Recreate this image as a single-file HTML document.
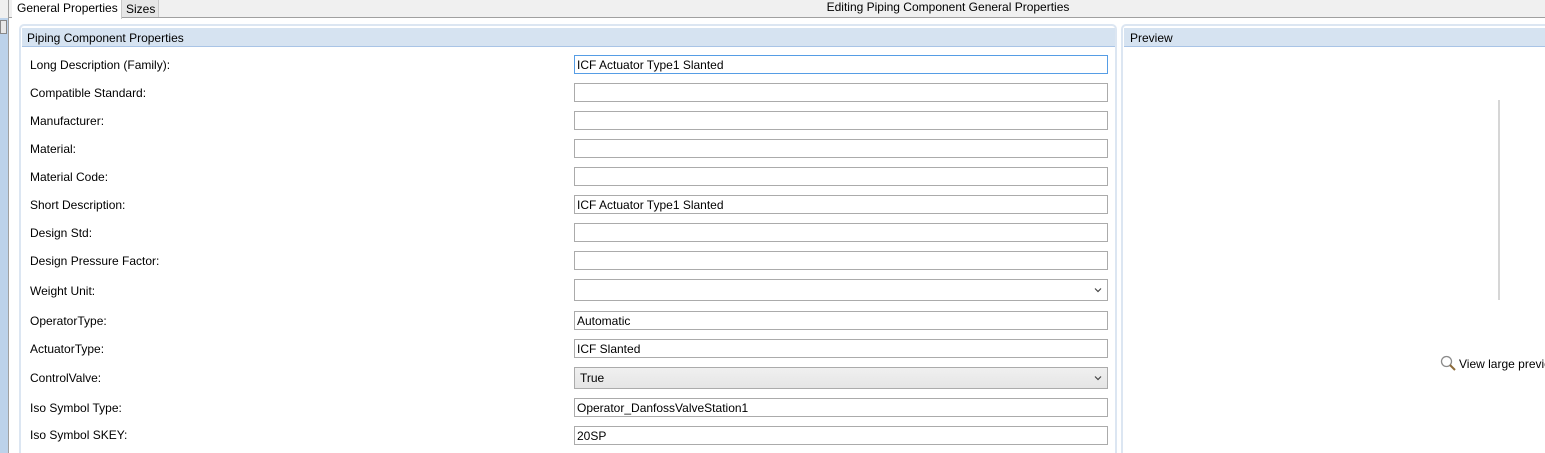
<!DOCTYPE html>
<html style="overflow:hidden"><head><style>
html,body{margin:0;width:1545px;height:453px;overflow:hidden}
body{background:#fff;font-family:"Liberation Sans",sans-serif;font-size:12px;color:#000;position:relative}
.a{position:absolute;box-sizing:border-box}
.lbl{position:absolute;left:30px;font-size:12px;line-height:14px}
.in{position:absolute;left:574px;width:534px;height:19px;border:1px solid #ababab;box-sizing:border-box;background:#fff;padding-left:2px;padding-top:1px;font-size:12px;line-height:17px}
.cb{height:22px;line-height:20px;padding-left:5px;padding-top:0}
.arr{position:absolute;right:5px;top:7px}
</style></head><body>
<div class="a" style="left:0;top:0;width:1545px;height:18px;background:#f0f0f0;border-bottom:1px solid #a0a0a0"></div>
<div class="a" style="left:0;top:0;width:9px;height:453px;background:#f0f0f0;border-right:1px solid #a0a0a0"></div>
<div class="a" style="left:0;top:18px;width:8px;height:435px;background:#bcd2ea"></div>
<div class="a" style="left:0;top:20px;width:7px;height:14px;border:1px solid #888;background:#e8e8e8"></div>
<div class="a" style="left:12px;top:0;width:110px;height:19px;background:#fff;border-right:1px solid #c8c8c8;padding:1px 0 0 5px;font-size:12px">General Properties</div>
<div class="a" style="left:122px;top:0;width:37px;height:17px;background:#e6e6e6;border-right:1px solid #c8c8c8;padding:2px 0 0 4px;font-size:12px">Sizes</div>
<div class="a" style="left:780px;top:0;width:336px;text-align:center;font-size:12px;line-height:14px">Editing Piping Component General Properties</div>

<div class="a" style="left:19px;top:24px;width:1098px;height:429px;border:2px solid #dce6f2;border-bottom:none;border-radius:5px 5px 0 0"></div>
<div class="a" style="left:22px;top:28px;width:1093px;height:19px;background:#d6e3f1;border-bottom:1px solid #a9c4e6;padding:3px 0 0 5px">Piping Component Properties</div>

<div class="a" style="left:1121px;top:24px;width:424px;height:429px;border:2px solid #dce6f2;border-bottom:none;border-right:none;border-radius:5px 0 0 0"></div>
<div class="a" style="left:1124px;top:28px;width:421px;height:19px;background:#d6e3f1;border-bottom:1px solid #a9c4e6;padding:3px 0 0 6px">Preview</div>
<div class="a" style="left:1498px;top:100px;width:2px;height:200px;background:#d6d6d6"></div>
<svg class="a" style="left:1440px;top:355px" width="17" height="17"><circle cx="6.5" cy="6.5" r="5" fill="none" stroke="#8a8a8a" stroke-width="1.3"/><line x1="10" y1="10" x2="15" y2="15" stroke="#8b6a3a" stroke-width="2"/></svg>
<div class="a" style="left:1459px;top:357px;width:86px;white-space:nowrap;overflow:hidden">View large preview</div>

<div class="lbl" style="top:58px">Long Description (Family):</div>
<div class="in" style="top:55px;border-color:#569de5">ICF Actuator Type1 Slanted</div>
<div class="lbl" style="top:86px">Compatible Standard:</div><div class="in" style="top:83px"></div>
<div class="lbl" style="top:114px">Manufacturer:</div><div class="in" style="top:111px"></div>
<div class="lbl" style="top:142px">Material:</div><div class="in" style="top:139px"></div>
<div class="lbl" style="top:170px">Material Code:</div><div class="in" style="top:167px"></div>
<div class="lbl" style="top:198px">Short Description:</div><div class="in" style="top:195px">ICF Actuator Type1 Slanted</div>
<div class="lbl" style="top:226px">Design Std:</div><div class="in" style="top:223px"></div>
<div class="lbl" style="top:254px">Design Pressure Factor:</div><div class="in" style="top:251px"></div>
<div class="lbl" style="top:284px">Weight Unit:</div><div class="in cb" style="top:279px"><svg class="arr" width="8" height="6"><path d="M1 1.5 L4 4.5 L7 1.5" fill="none" stroke="#444" stroke-width="1.2"/></svg></div>
<div class="lbl" style="top:314px">OperatorType:</div><div class="in" style="top:311px">Automatic</div>
<div class="lbl" style="top:342px">ActuatorType:</div><div class="in" style="top:339px">ICF Slanted</div>
<div class="lbl" style="top:371px">ControlValve:</div><div class="in cb" style="top:367px;background:linear-gradient(#f0f0f0,#e5e5e5)">True<svg class="arr" width="8" height="6"><path d="M1 1.5 L4 4.5 L7 1.5" fill="none" stroke="#444" stroke-width="1.2"/></svg></div>
<div class="lbl" style="top:401px">Iso Symbol Type:</div><div class="in" style="top:398px">Operator_DanfossValveStation1</div>
<div class="lbl" style="top:428px">Iso Symbol SKEY:</div><div class="in" style="top:426px">20SP</div>
</body></html>
